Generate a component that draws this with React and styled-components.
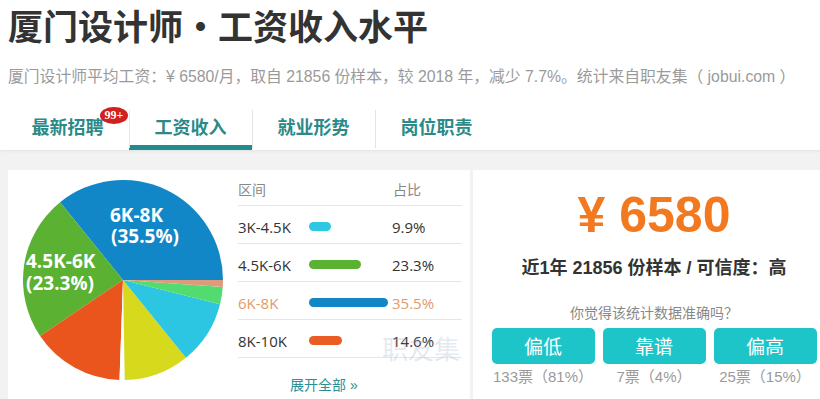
import styled, { createGlobalStyle } from "styled-components";

const GlobalStyle = createGlobalStyle`
  html, body {
    margin: 0;
    padding: 0;
    background: #f2f2f2;
    overflow: hidden;
  }
  body {
    font-family: "Liberation Sans", "Noto Sans CJK SC", sans-serif;
  }
`;

const Page = styled.div`
  width: 836px;
  height: 399px;
`;

const Header = styled.header`
  background: #fff;
  padding: 8px 0 0 8px;
  box-shadow: 0 1px 3px rgba(0, 0, 0, 0.07);
  position: relative;
`;

const Title = styled.h1`
  margin: 0;
  font-size: 35px;
  line-height: 40px;
  font-weight: bold;
  color: #333;
  letter-spacing: 0;
`;

const Subtitle = styled.p`
  margin: 19px 0 0;
  font-size: 15.8px;
  line-height: 20px;
  color: #9a9a9a;
  white-space: nowrap;
`;

const Tabs = styled.nav`
  display: flex;
  margin: 15px 0 0 -2px;
`;

const Tab = styled.div`
  position: relative;
  width: 123px;
  height: 48px;
  box-sizing: border-box;
  padding-top: 4px;
  display: flex;
  align-items: center;
  justify-content: center;
  border-bottom: 5px solid ${(p) => (p.$active ? "#1f8c90" : "transparent")};
  font-size: 18px;
  font-weight: bold;
  color: #2a8a88;

  &:not(:first-child)::before {
    content: "";
    position: absolute;
    left: 0;
    top: 8px;
    bottom: -3px;
    width: 1px;
    background: #e4e4e4;
  }
`;

const Badge = styled.span`
  position: absolute;
  top: 5px;
  left: 94px;
  width: 28px;
  height: 17px;
  border-radius: 50%;
  background: #d21f1f;
  color: #fff;
  font-family: "Liberation Serif", serif;
  font-size: 12px;
  font-weight: bold;
  line-height: 17px;
  text-align: center;
`;

const Main = styled.main`
  display: flex;
  gap: 3px;
  padding: 20px 0 0 8px;
`;

const LeftCard = styled.section`
  position: relative;
  width: 462px;
  height: 240px;
  box-sizing: border-box;
  padding: 0 8px 0 15px;
  display: flex;
  background: #fff;
`;

const PieWrap = styled.div`
  margin-top: 10px;
  width: 200px;
  height: 200px;
`;

const PieLabel = styled.text`
  font-family: "Open Sans", "Liberation Sans", sans-serif;
  font-size: 19px;
  font-weight: bold;
  fill: #fff;
`;

const Table = styled.div`
  position: relative;
  margin-left: 15px;
  width: 224px;
  padding-top: 5px;
`;

const HeadRow = styled.div`
  display: flex;
  height: 30px;
  line-height: 30px;
  border-bottom: 1px solid #e6e6e6;
  font-size: 14px;
  color: #888;
`;

const HeadCell = styled.span`
  width: ${(p) => p.$w || "auto"};
`;

const Row = styled.div`
  display: flex;
  align-items: center;
  height: 38px;
  box-sizing: border-box;
  padding-top: 4px;
  border-bottom: 1px solid #e6e6e6;
  font-family: "Open Sans", "Liberation Sans", sans-serif;
  font-size: 15px;
  color: ${(p) => (p.$hl ? "#e49a6a" : "#333")};
`;

const Range = styled.span`
  width: 71px;
`;

const BarCell = styled.span`
  width: 83px;
  display: flex;
  align-items: center;
`;

const Bar = styled.span`
  display: block;
  height: 9px;
  border-radius: 5px;
  background: ${(p) => p.$color};
`;

const Expand = styled.div`
  margin-top: 17px;
  padding-left: 52px;
  font-size: 14px;
  line-height: 20px;
  color: #2a8f96;
`;

const Watermark = styled.span`
  position: absolute;
  left: 144px;
  top: 164px;
  font-family: "Noto Sans CJK SC", sans-serif;
  font-size: 26px;
  line-height: 28px;
  color: rgba(160, 182, 205, 0.3);
  pointer-events: none;
`;

const RightPanel = styled.section`
  width: 362px;
  height: 240px;
  flex-shrink: 0;
  box-sizing: border-box;
  padding-top: 20px;
  background: #fff;
  display: flex;
  flex-direction: column;
  align-items: center;
`;

const Price = styled.div`
  font-size: 50px;
  line-height: 50px;
  font-weight: bold;
  color: #f2791f;
`;

const Meta = styled.div`
  margin-top: 16px;
  font-size: 18px;
  line-height: 24px;
  font-weight: bold;
  color: #333;
`;

const Question = styled.div`
  margin-top: 23px;
  font-size: 14px;
  line-height: 20px;
  color: #888;
`;

const Votes = styled.div`
  margin-top: 5px;
  display: grid;
  grid-template-columns: repeat(3, 103px);
  column-gap: 8px;
`;

const VoteCol = styled.div`
  display: flex;
  flex-direction: column;
  align-items: center;
`;

const VoteButton = styled.button`
  width: 103px;
  height: 36px;
  border: 0;
  border-radius: 5px;
  background: #1ec5c8;
  color: #fff;
  font-family: "Noto Sans CJK SC", sans-serif;
  font-size: 19px;
  line-height: 36px;
  padding: 0;
`;

const VoteCount = styled.span`
  margin-top: 3px;
  font-size: 15px;
  line-height: 20px;
  color: #9a9a9a;
  white-space: nowrap;
`;

const slices = [
  { color: "#1187c7", from: 0, to: 129 },
  { color: "#5ab132", from: 129, to: 214 },
  { color: "#e9551d", from: 214, to: 268 },
  { color: "#ffffff", from: 268, to: 271 },
  { color: "#d7d91d", from: 271, to: 309 },
  { color: "#2dc6e2", from: 309, to: 346 },
  { color: "#52dc6f", from: 346, to: 356 },
  { color: "#dc9b7b", from: 356, to: 360 },
];

const rows = [
  { range: "3K-4.5K", pct: 9.9, color: "#2fc8e2" },
  { range: "4.5K-6K", pct: 23.3, color: "#5ab132" },
  { range: "6K-8K", pct: 35.5, color: "#1386c5", hl: true },
  { range: "8K-10K", pct: 14.6, color: "#e95c24" },
];

const votes = [
  { label: "偏低", count: "133票（81%）" },
  { label: "靠谱", count: "7票（4%）" },
  { label: "偏高", count: "25票（15%）" },
];

const tabs = ["最新招聘", "工资收入", "就业形势", "岗位职责"];

const point = (deg) => {
  const a = (deg * Math.PI) / 180;
  return [100 + 100 * Math.cos(a), 100 - 100 * Math.sin(a)];
};

const slicePath = (from, to) => {
  const [x1, y1] = point(from);
  const [x2, y2] = point(to);
  const large = to - from > 180 ? 1 : 0;
  return `M100 100 L${x1} ${y1} A100 100 0 ${large} 0 ${x2} ${y2} Z`;
};

const Pie = () => (
  <PieWrap>
    <svg width="200" height="200" viewBox="0 0 200 200">
      {slices.map((s) => (
        <path key={s.from} d={slicePath(s.from, s.to)} fill={s.color} />
      ))}
      <PieLabel x="87" y="42">6K-8K</PieLabel>
      <PieLabel x="88" y="63">(35.5%)</PieLabel>
      <PieLabel x="3" y="88">4.5K-6K</PieLabel>
      <PieLabel x="3" y="110">(23.3%)</PieLabel>
    </svg>
  </PieWrap>
);

const App = () => (
  <Page>
    <GlobalStyle />
    <Header>
      <Title>厦门设计师・工资收入水平</Title>
      <Subtitle>
        厦门设计师平均工资：¥ 6580/月，取自 21856 份样本，较 2018 年，减少 7.7%。统计来自职友集（ jobui.com ）
      </Subtitle>
      <Tabs>
        {tabs.map((t, i) => (
          <Tab key={t} $active={i === 1}>
            {t}
            {i === 0 && <Badge>99+</Badge>}
          </Tab>
        ))}
      </Tabs>
    </Header>
    <Main>
      <LeftCard>
        <Pie />
        <Table>
          <HeadRow>
            <HeadCell $w="155px">区间</HeadCell>
            <HeadCell>占比</HeadCell>
          </HeadRow>
          {rows.map((r) => (
            <Row key={r.range} $hl={r.hl}>
              <Range>{r.range}</Range>
              <BarCell>
                <Bar $color={r.color} style={{ width: `${r.pct * 2.23}px` }} />
              </BarCell>
              <span>{r.pct}%</span>
            </Row>
          ))}
          <Expand>展开全部 »</Expand>
          <Watermark>职友集</Watermark>
        </Table>
      </LeftCard>
      <RightPanel>
        <Price>¥ 6580</Price>
        <Meta>近1年 21856 份样本 / 可信度：高</Meta>
        <Question>你觉得该统计数据准确吗？</Question>
        <Votes>
          {votes.map((v) => (
            <VoteCol key={v.label}>
              <VoteButton>{v.label}</VoteButton>
              <VoteCount>{v.count}</VoteCount>
            </VoteCol>
          ))}
        </Votes>
      </RightPanel>
    </Main>
  </Page>
);

export default App;
